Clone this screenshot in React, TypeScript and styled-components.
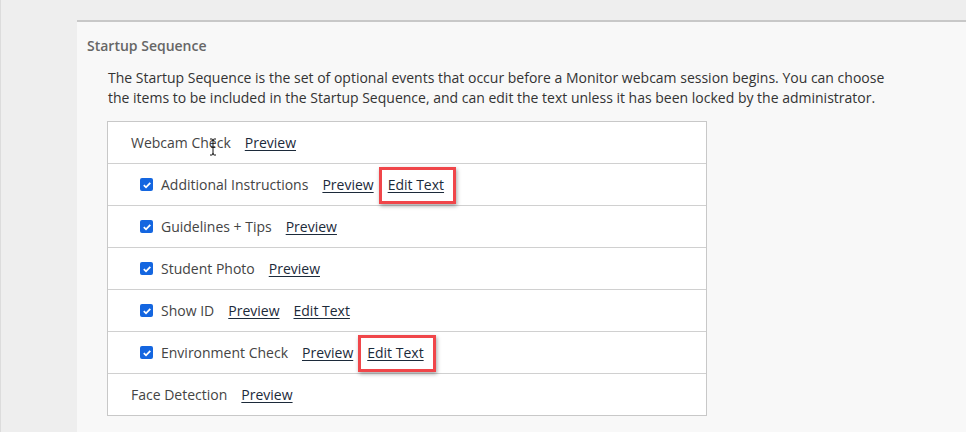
import styled, { createGlobalStyle } from "styled-components";

const GlobalStyle = createGlobalStyle`
    html, body {
        margin: 0;
        padding: 0;
        background-color: #eeeeee;
        font-family: "Open Sans", "Liberation Sans", sans-serif;
    }
`

export const Page = styled.div`
    display: flex;
    height: 432px;
    padding: 20px 0 0 76px;
    box-sizing: border-box;
    border-left: 1px solid #dcdcdc;
    overflow: hidden;
`

export const Panel = styled.section`
    flex: 1;
    background-color: #f8f8f8;
    border-top: 2px solid #c8c8c8;
    padding: 14px 10px 0 10px;
`

export const Title = styled.h2`
    margin: 0;
    font-size: 14px;
    line-height: 20px;
    font-weight: 600;
    color: #666666;
`

export const Description = styled.p`
    margin: 12px 0 0 21px;
    width: 800px;
    font-size: 14px;
    line-height: 20px;
    color: #333333;
`

export const Table = styled.div`
    position: relative;
    box-sizing: border-box;
    margin: 13px 0 0 20px;
    width: 600px;
    background-color: #ffffff;
    border: 1px solid #c8c8c8;
`

export const Row = styled.div<{ $indent?: boolean }>`
    display: flex;
    align-items: center;
    gap: 14px;
    height: 41px;
    padding-left: ${(p) => (p.$indent ? 32 : 23)}px;
    font-size: 14px;
    color: #444444;

    & + & {
        border-top: 1px solid #d0d0d0;
    }
`

export const Label = styled.span`
    display: flex;
    align-items: center;
    gap: 8px;
`

export const Box = styled.span`
    display: inline-flex;
    align-items: center;
    justify-content: center;
    width: 13px;
    height: 13px;
    border-radius: 2px;
    background-color: #1466e0;
`

export const Link = styled.a`
    color: #1c2a3a;
    text-decoration: underline;
    text-underline-offset: 2px;
    cursor: pointer;
`

export const Highlight = styled.span`
    position: relative;

    &::after {
        content: "";
        position: absolute;
        left: -9px;
        right: -12px;
        top: -8px;
        bottom: -10px;
        border: 3px solid #f0464a;
        box-shadow: 1px 2px 4px rgba(0, 0, 0, 0.35);
        pointer-events: none;
    }
`

export const Cursor = styled.svg`
    position: absolute;
    left: 101px;
    top: 16px;
`

const Check = () => (
    <Box>
        <svg width="10" height="10" viewBox="0 0 10 10">
            <path d="M1.8 5.2 L4 7.3 L8.3 2.8" fill="none" stroke="#fff" strokeWidth="1.8" />
        </svg>
    </Box>
)

interface Item {
    name: string
    checkbox: boolean
    edit: boolean
    highlight?: boolean
}

const items: Item[] = [
    { name: "Webcam Check", checkbox: false, edit: false },
    { name: "Additional Instructions", checkbox: true, edit: true, highlight: true },
    { name: "Guidelines + Tips", checkbox: true, edit: false },
    { name: "Student Photo", checkbox: true, edit: false },
    { name: "Show ID", checkbox: true, edit: true },
    { name: "Environment Check", checkbox: true, edit: true, highlight: true },
    { name: "Face Detection", checkbox: false, edit: false },
]

export default function App() {
    return (
        <>
            <GlobalStyle />
            <Page>
                <Panel>
                    <Title>Startup Sequence</Title>
                    <Description>
                        The Startup Sequence is the set of optional events that occur before a Monitor webcam session begins. You can choose the items to be included in the Startup Sequence, and can edit the text unless it has been locked by the administrator.
                    </Description>
                    <Table>
                        {items.map((it) => (
                            <Row key={it.name} $indent={it.checkbox}>
                                <Label>
                                    {it.checkbox && <Check />}
                                    {it.name}
                                </Label>
                                <Link>Preview</Link>
                                {it.edit && (it.highlight ? (
                                    <Highlight><Link>Edit Text</Link></Highlight>
                                ) : (
                                    <Link>Edit Text</Link>
                                ))}
                            </Row>
                        ))}
                        <Cursor width="8" height="18" viewBox="0 0 8 18">
                            <path d="M1 1 H3 Q4 1 4 3 V15 Q4 17 5 17 H7 M1 17 H3 Q4 17 4 15 M4 3 Q4 1 5 1 H7 M2 9 H6" fill="none" stroke="#111" strokeWidth="1" />
                        </Cursor>
                    </Table>
                </Panel>
            </Page>
        </>
    )
}
